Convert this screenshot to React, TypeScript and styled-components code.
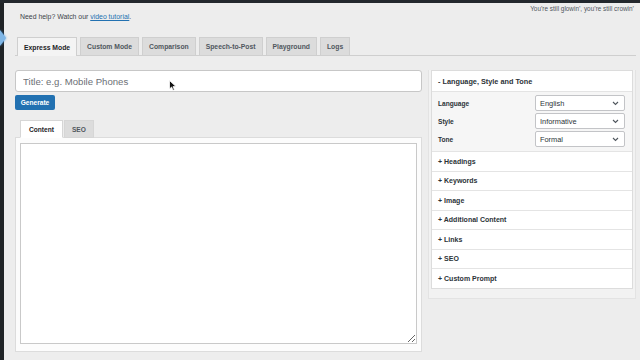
import React from "react"
import styled, { createGlobalStyle } from "styled-components"

const GlobalStyle = createGlobalStyle`
  html, body {
    margin: 0;
    padding: 0;
    background: #ededed;
    font-family: "Liberation Sans", Arial, sans-serif;
    color: #2c3338;
  }
  * { box-sizing: border-box; }
`

const mainTabs = ["Express Mode", "Custom Mode", "Comparison", "Speech-to-Post", "Playground", "Logs"]
const sections = ["Headings", "Keywords", "Image", "Additional Content", "Links", "SEO", "Custom Prompt"]
const settings = [
  { label: "Language", value: "English" },
  { label: "Style", value: "Informative" },
  { label: "Tone", value: "Formal" },
]

const Chevron = () => (
  <svg width="7" height="5" viewBox="0 0 7 5">
    <path d="M1 1 L3.5 3.5 L6 1" fill="none" stroke="#50575e" strokeWidth="1.1" />
  </svg>
)

const App = () => {
  return (
    <Page>
      <GlobalStyle />
      <TopBar />
      <Body>
        <AdminStrip>
          <MenuArrow />
        </AdminStrip>
        <Wrap>
          <Notice>You’re still glowin’, you’re still crowin’</Notice>
          <Help>
            Need help? Watch our <a href="#">video tutorial</a>.
          </Help>
          <TabBar>
            {mainTabs.map((t, i) => (
              <Tab key={t} active={i === 0}>{t}</Tab>
            ))}
          </TabBar>
          <Columns>
            <LeftCol>
              <TitleInput placeholder="Title: e.g. Mobile Phones" />
              <GenerateButton>Generate</GenerateButton>
              <SubTabs>
                <SubTab active>Content</SubTab>
                <SubTab>SEO</SubTab>
              </SubTabs>
              <Panel>
                <Editor />
              </Panel>
              <Cursor width="8" height="11" viewBox="0 0 8 11">
                <path d="M0.5 0.5 L0.5 9 L2.6 7 L4 10.3 L5.4 9.7 L4 6.6 L7 6.6 Z" fill="#111" stroke="#fff" strokeWidth="0.8" />
              </Cursor>
            </LeftCol>
            <SideWrap>
              <SideBox>
                <SectionHead>- Language, Style and Tone</SectionHead>
                <Settings>
                  {settings.map(s => (
                    <SettingRow key={s.label}>
                      <SettingLabel>{s.label}</SettingLabel>
                      <FakeSelect>
                        <span>{s.value}</span>
                        <Chevron />
                      </FakeSelect>
                    </SettingRow>
                  ))}
                </Settings>
                {sections.map(s => (
                  <SectionRow key={s}>+ {s}</SectionRow>
                ))}
              </SideBox>
            </SideWrap>
          </Columns>
        </Wrap>
      </Body>
    </Page>
  )
}

const Page = styled.div`
  width: 640px;
  height: 360px;
  overflow: hidden;
  display: flex;
  flex-direction: column;
  background: #ededed;
`

const TopBar = styled.div`
  height: 3px;
  background: #23282d;
  flex-shrink: 0;
`

const Body = styled.div`
  flex: 1;
  display: flex;
`

const AdminStrip = styled.div`
  position: relative;
  width: 4px;
  background: #1f2326;
  flex-shrink: 0;
`

const MenuArrow = styled.div`
  position: absolute;
  top: 27px;
  left: 0;
  width: 0;
  height: 0;
  border-top: 8px solid transparent;
  border-bottom: 8px solid transparent;
  border-left: 6px solid #7fb6e6;
  filter: drop-shadow(0 0 1px #4d9be0);
`

const Wrap = styled.div`
  flex: 1;
  padding: 0 4px 0 11px;
  position: relative;
`

const Notice = styled.div`
  font-size: 6.4px;
  line-height: 8px;
  color: #50575e;
  text-align: right;
  padding-top: 2px;
  padding-right: 2px;
`

const Help = styled.div`
  font-size: 6.9px;
  line-height: 9px;
  color: #3c434a;
  padding-left: 5px;
  margin-top: -1px;

  a {
    color: #2271b1;
    text-decoration: underline;
  }
`

const TabBar = styled.div`
  display: flex;
  gap: 3px;
  margin-top: 16px;
  padding-left: 2px;
  border-bottom: 1px solid #cfcfcf;
  height: 19px;
`

const Tab = styled.div<{ active?: boolean }>`
  height: ${p => (p.active ? "19px" : "18px")};
  padding: 0 6px;
  display: flex;
  align-items: center;
  font-size: 6.8px;
  font-weight: 700;
  color: ${p => (p.active ? "#1d2327" : "#50575e")};
  background: ${p => (p.active ? "#f4f4f4" : "#dcdcdc")};
  border: 1px solid #cfcfcf;
  border-bottom: none;
`

const Columns = styled.div`
  display: grid;
  grid-template-columns: 407px 208px;
  column-gap: 6px;
  align-items: start;
  margin-top: 14px;
`

const LeftCol = styled.div`
  display: flex;
  flex-direction: column;
  align-items: flex-start;
  position: relative;
`

const TitleInput = styled.input`
  width: 407px;
  height: 22px;
  border: 1px solid #c7c7c7;
  border-radius: 3px;
  background: #fff;
  padding: 0 7px;
  font-family: "Liberation Sans", Arial, sans-serif;
  font-size: 9.6px;
  outline: none;

  &::placeholder {
    color: #6c7076;
  }
`

const GenerateButton = styled.button`
  margin-top: 3px;
  height: 15px;
  width: 40px;
  padding: 0;
  border: none;
  border-radius: 2px;
  background: #2271b1;
  color: #fff;
  font-family: "Liberation Sans", Arial, sans-serif;
  font-size: 6.6px;
  font-weight: 700;
`

const SubTabs = styled.div`
  display: flex;
  gap: 1px;
  margin-top: 10px;
  margin-left: 5px;
  position: relative;
  z-index: 1;
  margin-bottom: -1px;
`

const SubTab = styled.div<{ active?: boolean }>`
  height: 18px;
  padding: 0 ${p => (p.active ? "8px" : "7px")};
  display: flex;
  align-items: center;
  font-size: 6.6px;
  font-weight: 700;
  color: ${p => (p.active ? "#1d2327" : "#50575e")};
  background: ${p => (p.active ? "#fff" : "#dcdcdc")};
  border: 1px solid #d6d6d6;
  border-bottom: ${p => (p.active ? "1px solid #fff" : "1px solid #d6d6d6")};
`

const Panel = styled.div`
  width: 407px;
  height: 215px;
  background: #fcfcfc;
  border: 1px solid #dcdcdc;
  padding: 5px 4px 7px 4px;
`

const Editor = styled.textarea`
  width: 100%;
  height: 100%;
  border: 1px solid #c9c9c9;
  background: #fff;
  resize: vertical;
  outline: none;
`

const Cursor = styled.svg`
  position: absolute;
  left: 154px;
  top: 10px;
`

const SideWrap = styled.div`
  background: #f2f2f2;
  border: 1px solid #e3e3e3;
  border-top: none;
  padding: 0 2px 9px 2px;
`

const SideBox = styled.div`
  background: #fff;
  border: 1px solid #dcdcdc;
`

const SectionHead = styled.div`
  height: 20px;
  display: flex;
  align-items: center;
  padding-left: 6px;
  font-size: 7.3px;
  font-weight: 700;
  color: #2c3338;
`

const Settings = styled.div`
  background: #f6f6f6;
  border-top: 1px solid #e4e4e4;
  padding: 3px 7px 4px 6px;
  display: flex;
  flex-direction: column;
  gap: 2px;
`

const SettingRow = styled.div`
  display: flex;
  align-items: center;
  justify-content: space-between;
  height: 16px;
`

const SettingLabel = styled.div`
  font-size: 6.6px;
  font-weight: 700;
  color: #2c3338;
`

const FakeSelect = styled.div`
  width: 90px;
  height: 16px;
  background: #fff;
  border: 1px solid #c3c4c7;
  border-radius: 2px;
  display: flex;
  align-items: center;
  justify-content: space-between;
  padding: 0 5px 0 4px;
  font-size: 7.4px;
  color: #2c3338;
`

const SectionRow = styled.div`
  height: 19.5px;
  display: flex;
  align-items: center;
  padding-left: 6px;
  border-top: 1px solid #e4e4e4;
  font-size: 7px;
  font-weight: 700;
  color: #2c3338;
`

export default App
